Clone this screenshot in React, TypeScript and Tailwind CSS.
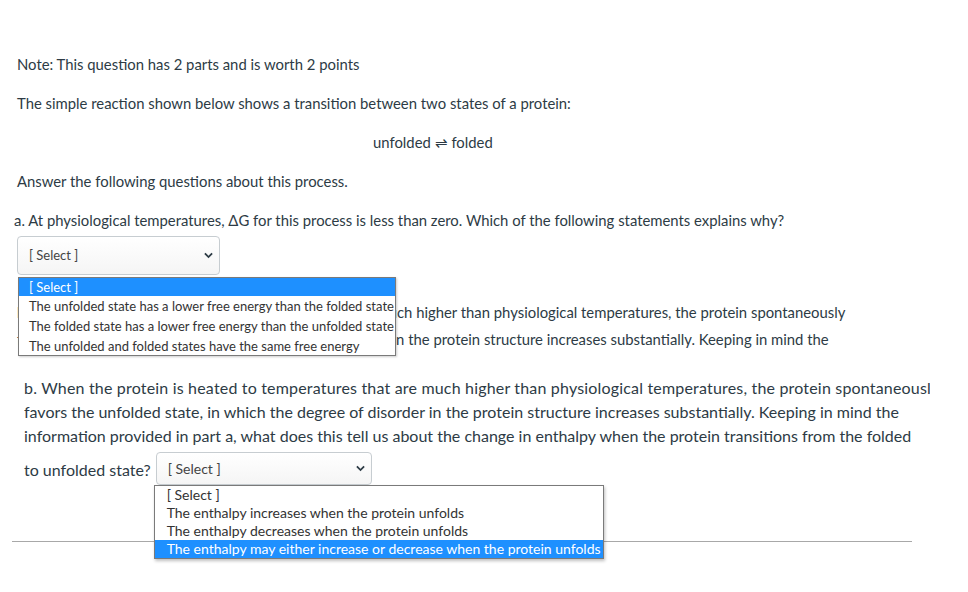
import React from 'react';

const partB = [
  'b. When the protein is heated to temperatures that are much higher than physiological temperatures, the protein spontaneously',
  'favors the unfolded state, in which the degree of disorder in the protein structure increases substantially. Keeping in mind the',
  'information provided in part a, what does this tell us about the change in enthalpy when the protein transitions from the folded',
];

const optionsA = [
  '[ Select ]',
  'The unfolded state has a lower free energy than the folded state',
  'The folded state has a lower free energy than the unfolded state',
  'The unfolded and folded states have the same free energy',
];

const optionsB = [
  '[ Select ]',
  'The enthalpy increases when the protein unfolds',
  'The enthalpy decreases when the protein unfolds',
  'The enthalpy may either increase or decrease when the protein unfolds',
];

function Chevron({ className }: { className?: string }) {
  return (
    <svg className={className} viewBox="0 0 10 7" fill="none" stroke="#2d3b45" strokeWidth={2}>
      <path d="M1 1.2l4 4 4-4" />
    </svg>
  );
}

export default function App() {
  return (
    <div className="w-[968px] h-[592px] bg-white text-[#2d3b45] font-['Lato','Noto_Sans',sans-serif] overflow-hidden">
      {/* part a screenshot */}
      <div className="h-[359px] overflow-hidden pl-[17px] pt-[52px]">
        <div className="text-[14.85px] leading-[24px] flex flex-col gap-[15px]">
          <p>Note: This question has 2 parts and is worth 2 points</p>
          <p>The simple reaction shown below shows a transition between two states of a protein:</p>
          <p className="pl-[356px]">unfolded ⇌ folded</p>
          <p>Answer the following questions about this process.</p>
          <p className="-ml-[3px]">
            a. At physiological temperatures, ΔG for this process is less than zero. Which of the following statements explains why?
          </p>
        </div>
        <div className="relative mt-[4px] w-[203px]">
          <div className="h-[39px] rounded-[4px] border border-[#c7cdd1] bg-gradient-to-b from-white to-[#f5f5f5] flex items-center justify-between pl-[11px] pr-[6px] text-[13px] text-[#444]">
            <span>[ Select ]</span>
            <Chevron className="w-[9px] h-[7px]" />
          </div>
          <ul className="absolute left-[1px] top-[41px] w-[378px] h-[79px] bg-white border border-[#7a7a7a] shadow-[1px_1px_2px_rgba(0,0,0,0.2)] text-[13px] leading-[20px] text-[#333] z-10">
            {optionsA.map((o, i) => (
              <li key={o} className={i === 0 ? 'bg-[#1e90ff] text-white pl-[10px] h-[18px] leading-[18px]' : 'pl-[10px]'}>
                {o}
              </li>
            ))}
          </ul>
        </div>
        <div className="mt-[24px] text-[14.85px] leading-[27px] whitespace-nowrap">
          {partB.map((l) => (
            <div key={l}>{l}</div>
          ))}
        </div>
      </div>

      {/* part b screenshot */}
      <div className="pl-[24px] pt-[17px] text-[16px] text-[#2d3b45]">
        <div className="w-[906px] overflow-hidden leading-[24px] whitespace-nowrap">
          {partB.map((l, i) => (
            <div key={l} className={i === 0 ? 'tracking-[0.18px]' : ''}>
              {l}
            </div>
          ))}
        </div>
        <div className="mt-[4px] flex items-center gap-[5px]">
          <span className="leading-[24px] translate-y-[1px]">to unfolded state?</span>
          <div className="relative w-[216px]">
            <div className="h-[33px] rounded-[4px] border border-[#c7cdd1] bg-gradient-to-b from-white to-[#f5f5f5] flex items-center justify-between pl-[11px] pr-[6px] text-[14px] text-[#444]">
              <span>[ Select ]</span>
              <Chevron className="w-[9px] h-[7px]" />
            </div>
            <ul className="absolute -left-[2px] top-[33px] w-[450px] h-[74px] bg-white border border-[#7a7a7a] shadow-[1px_2px_3px_rgba(0,0,0,0.25)] text-[14px] leading-[18px] text-[#333] z-10">
              {optionsB.map((o, i) => (
                <li key={o} className={i === 3 ? 'bg-[#1e90ff] text-white pl-[12px]' : 'pl-[12px]'}>
                  {o}
                </li>
              ))}
            </ul>
          </div>
        </div>
        <div className="mt-[56px] -ml-[12px] w-[900px] h-px bg-[#a8a8a8]" />
      </div>
    </div>
  );
}
